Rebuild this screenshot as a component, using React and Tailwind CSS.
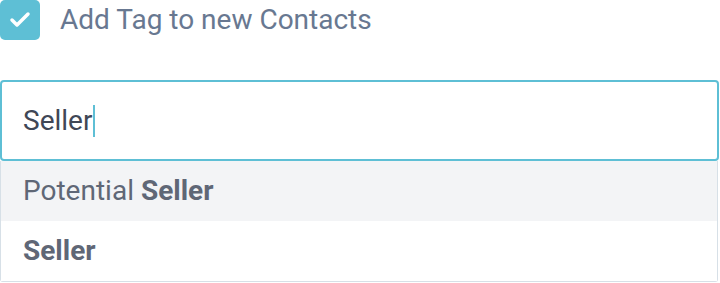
import React from "react";
import { Check } from "lucide-react";

const App = () => {
  const options = [
    { prefix: "Potential ", match: "Seller", active: true },
    { prefix: "", match: "Seller", active: false },
  ];

  return (
    <div className="w-[720px] h-[283px] bg-white" style={{ fontFamily: "Roboto, 'Liberation Sans', sans-serif" }}>
      {/* Checkbox row */}
      <div className="flex items-center gap-5 h-10">
        <div className="w-10 h-10 rounded-[5px] bg-[#5ebfd5] flex items-center justify-center">
          <Check size={24} strokeWidth={3.5} className="text-white" />
        </div>
        <span className="text-[28px] text-[#687891] leading-none">Add Tag to new Contacts</span>
      </div>

      {/* Tag input */}
      <div className="mt-10 w-[719px]">
        <div className="h-[81px] border-2 border-[#5ebfd5] rounded-[4px] flex items-center px-[21px]">
          <span className="text-[28px] text-[#404756] leading-none">Seller</span>
          <span className="w-[2px] h-[32px] bg-[#5ebfd5] ml-[1px]"></span>
        </div>
        <div className="border border-t-0 border-[#d7e0e7] rounded-b-[3px] mr-[1px]">
          {options.map((opt, i) => (
            <div
              key={i}
              className={`h-[60px] flex items-center px-[22px] text-[28px] text-[#5f6776] ${opt.active ? "bg-[#f3f4f6]" : "bg-white"}`}
            >
              <span className="whitespace-pre">
                {opt.prefix}
                <span className="font-bold">{opt.match}</span>
              </span>
            </div>
          ))}
        </div>
      </div>
    </div>
  );
};

export default App;
